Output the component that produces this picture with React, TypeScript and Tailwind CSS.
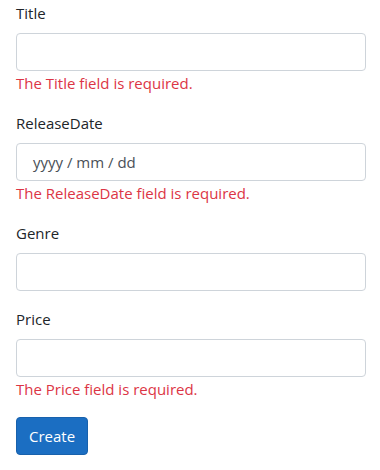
import React from 'react'

const font = { fontFamily: '"Open Sans", "Liberation Sans", sans-serif' }

function Field({ label, error, children }: { label: string; error?: string; children: React.ReactNode }) {
  return (
    <div className="mb-4">
      <label className="block text-[15px] leading-6 mb-2 text-[#212529]">{label}</label>
      {children}
      {error && <span className="block text-[15px] leading-6 text-[#dc3545]">{error}</span>}
    </div>
  )
}

const inputCls =
  'block w-[350px] h-[38px] px-3 border border-[#ced4da] rounded bg-white text-[15px] text-[#495057] outline-none'

export default function App() {
  return (
    <div className="bg-white w-[380px] h-[470px] pl-4 pt-px text-[#212529]" style={font}>
      <form onSubmit={e => e.preventDefault()}>
        <Field label="Title" error="The Title field is required.">
          <input className={inputCls} type="text" />
        </Field>
        <Field label="ReleaseDate" error="The ReleaseDate field is required.">
          <div className={inputCls + ' flex items-center pl-4'}>
            <span className="text-[#495057]">yyyy / mm / dd</span>
          </div>
        </Field>
        <Field label="Genre">
          <input className={inputCls} type="text" />
        </Field>
        <Field label="Price" error="The Price field is required.">
          <input className={inputCls} type="text" />
        </Field>
        <button
          type="submit"
          className="h-[38px] px-3 rounded border border-[#1861ac] bg-[#1b6ec2] text-white text-[15px] leading-6"
        >
          Create
        </button>
      </form>
    </div>
  )
}
